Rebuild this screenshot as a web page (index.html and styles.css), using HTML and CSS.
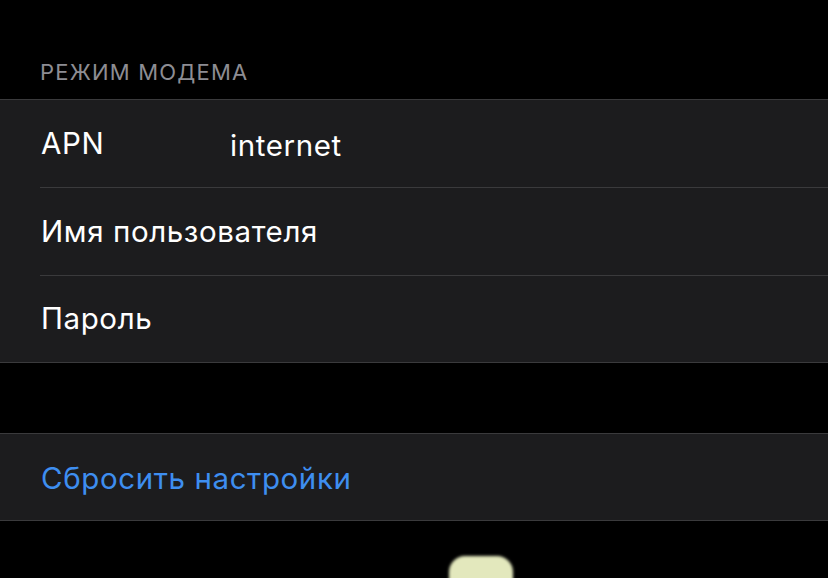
FILE: index.html
```html
<!DOCTYPE html>
<html lang="ru">
<head>
<meta charset="utf-8">
<link rel="stylesheet" href="styles.css">
</head>
<body>
<div class="screen">
  <div class="section-header">РЕЖИМ МОДЕМА</div>
  <div class="group">
    <div class="row"><div class="row-inner"><span class="label">APN</span><span class="value">internet</span></div></div>
    <div class="row"><div class="row-inner"><span class="label">Имя пользователя</span><span class="value"></span></div></div>
    <div class="row last"><div class="row-inner"><span class="label">Пароль</span><span class="value"></span></div></div>
  </div>
  <div class="group second">
    <div class="row last"><div class="row-inner"><span class="action">Сбросить настройки</span></div></div>
  </div>
  <div class="blob-wrap"><div class="blob"></div></div>
</div>
</body>
</html>
```
FILE: styles.css
```css
html, body {
  margin: 0;
  padding: 0;
  background: #000;
  width: 828px;
  height: 578px;
  overflow: hidden;
}
.screen {
  font-family: "Inter", "Roboto", "Noto Sans", sans-serif;
  color: #fff;
}
.section-header {
  height: 99px;
  box-sizing: border-box;
  display: flex;
  align-items: flex-end;
  padding: 0 0 14px 40px;
  font-size: 22px;
  color: #8d8d93;
  letter-spacing: 1.2px;
  white-space: nowrap;
}
.group {
  background: #1c1c1e;
  border-top: 1px solid #3a3a3c;
  border-bottom: 1px solid #3a3a3c;
}
.group.second {
  margin-top: 70px;
}
.row {
  padding-left: 40px;
}
.row-inner {
  height: 87px;
  border-bottom: 1px solid #3a3a3c;
  display: grid;
  grid-template-columns: 190px 1fr;
  align-items: center;
  font-size: 29.5px;
  letter-spacing: 0.6px;
  white-space: nowrap;
}
.row.last .row-inner {
  border-bottom: none;
  height: 86px;
}
.label {
  padding-left: 1px;
  padding-bottom: 2px;
}
.value {
  padding-top: 2px;
}
.action {
  color: #3e8ef0;
  padding-left: 1px;
  grid-column: 1 / 3;
  padding-top: 2px;
}
.blob-wrap {
  height: 58px;
  padding-top: 35px;
  box-sizing: border-box;
  padding-left: 449px;
}
.blob {
  width: 64px;
  height: 40px;
  border-radius: 16px 16px 0 0;
  background: #e3e8bd;
  filter: blur(1.5px);
}
```
